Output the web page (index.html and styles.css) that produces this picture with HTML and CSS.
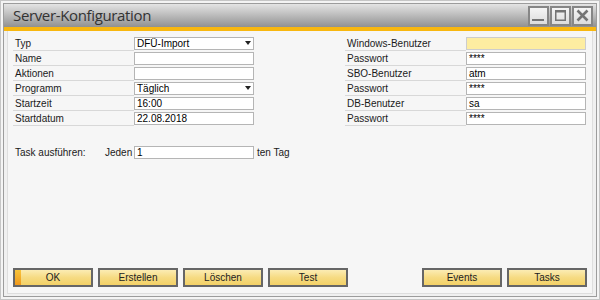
FILE: index.html
```html
<!DOCTYPE html>
<html lang="de">
<head>
    <meta charset="UTF-8">
    <title>Server-Konfiguration</title>
    <link rel="stylesheet" href="styles.css">
</head>
<body>
    <div class="window">
        <div class="titlebar">
            <span class="title">Server-Konfiguration</span>
            <div class="win-buttons">
                <span class="wbtn">
                    <svg width="17" height="16" viewBox="0 0 17 16"><rect x="2" y="11" width="12" height="2" fill="#747474"/></svg>
                </span>
                <span class="wbtn">
                    <svg width="17" height="16" viewBox="0 0 17 16"><rect x="3.75" y="2.75" width="9.5" height="9.5" fill="none" stroke="#747474" stroke-width="1.5"/><rect x="3" y="2" width="11" height="2.5" fill="#747474"/></svg>
                </span>
                <span class="wbtn">
                    <svg width="17" height="16" viewBox="0 0 17 16"><path d="M3.5 2.5 L13.5 12.5 M13.5 2.5 L3.5 12.5" stroke="#747474" stroke-width="2.6"/></svg>
                </span>
            </div>
        </div>
        <div class="accent"></div>

        <div class="panel">
            <div class="form">
                <div class="group">
                    <div class="row"><span class="label">Typ</span><span class="field select">DFÜ-Import</span></div>
                    <div class="row"><span class="label">Name</span><span class="field"></span></div>
                    <div class="row"><span class="label">Aktionen</span><span class="field"></span></div>
                    <div class="row"><span class="label">Programm</span><span class="field select">Täglich</span></div>
                    <div class="row"><span class="label">Startzeit</span><span class="field">16:00</span></div>
                    <div class="row"><span class="label">Startdatum</span><span class="field">22.08.2018</span></div>
                </div>
                <div class="group">
                    <div class="row"><span class="label">Windows-Benutzer</span><span class="field active"></span></div>
                    <div class="row"><span class="label">Passwort</span><span class="field">****</span></div>
                    <div class="row"><span class="label">SBO-Benutzer</span><span class="field">atm</span></div>
                    <div class="row"><span class="label">Passwort</span><span class="field">****</span></div>
                    <div class="row"><span class="label">DB-Benutzer</span><span class="field">sa</span></div>
                    <div class="row"><span class="label">Passwort</span><span class="field">****</span></div>
                </div>
            </div>

            <div class="task">
                <span class="task-label">Task ausführen:</span>
                <span class="task-jeden">Jeden</span>
                <span class="field">1</span>
                <span class="task-unit">ten Tag</span>
            </div>

            <div class="actions">
                <button class="btn primary">OK</button>
                <button class="btn">Erstellen</button>
                <button class="btn">Löschen</button>
                <button class="btn">Test</button>
                <button class="btn push">Events</button>
                <button class="btn">Tasks</button>
            </div>
        </div>
    </div>
</body>
</html>
```

FILE: styles.css
```css
html, body {
    margin: 0;
}
body {
    width: 600px;
    height: 300px;
    box-sizing: border-box;
    border: 1px solid #c6c6c6;
    padding: 2px;
    background: #f4f4f4;
    font-family: "Liberation Sans", Arial, sans-serif;
    font-size: 10px;
    color: #1b1b1b;
}
.window {
    height: 294px;
    box-sizing: border-box;
    border: 1px solid #9c9c9c;
    background: #f0f0f0;
    display: flex;
    flex-direction: column;
}
.titlebar {
    height: 23px;
    display: flex;
    align-items: center;
    padding-left: 9px;
    background: linear-gradient(#e4e4e4, #919191);
}
.title {
    font-family: "Open Sans", "Noto Sans", sans-serif;
    font-size: 15px;
    letter-spacing: -0.35px;
    line-height: 23px;
    color: #333;
}
.win-buttons {
    margin-left: auto;
    align-self: flex-start;
    margin-top: 2px;
    padding-right: 3px;
    display: flex;
    gap: 1px;
}
.wbtn {
    width: 21px;
    height: 20px;
    box-sizing: border-box;
    border: 2px solid #868686;
    background: linear-gradient(#f5f5f5, #dcdcdc);
}
.wbtn svg {
    display: block;
}
.accent {
    height: 4px;
    background: #f8b70f;
}
.panel {
    flex: 1;
    margin: 0 3px 2px 3px;
    border: 1px solid #dedede;
    border-top: none;
    background: #f6f6f6;
    display: flex;
    flex-direction: column;
    padding: 6px 5px 0 5px;
}
.form {
    display: flex;
    gap: 91px;
}
.row {
    display: flex;
    height: 15px;
}
.label {
    width: 121px;
    height: 14px;
    box-sizing: border-box;
    padding-left: 2px;
    line-height: 13px;
    border-bottom: 1px solid #d8d8d8;
}
.field {
    position: relative;
    width: 120px;
    height: 13px;
    box-sizing: border-box;
    border: 1px solid #b5b5b5;
    background: #fff;
    padding: 0 2px;
    line-height: 12px;
    color: #000;
}
.field.active {
    background: #fdeda1;
    border-color: #cdcdcd;
}
.select::after {
    content: "";
    position: absolute;
    right: 2px;
    top: 3px;
    border-left: 3.5px solid transparent;
    border-right: 3.5px solid transparent;
    border-top: 4px solid #222;
}
.task {
    margin-top: 18px;
    display: flex;
    align-items: center;
    height: 14px;
}
.task-label {
    width: 92px;
    padding-left: 2px;
    box-sizing: border-box;
}
.task-jeden {
    width: 29px;
}
.task-unit {
    margin-left: 3px;
}
.actions {
    margin-top: auto;
    padding-bottom: 6px;
    display: flex;
    gap: 5px;
}
.btn {
    width: 80px;
    height: 19px;
    box-sizing: border-box;
    border: 2px solid #666;
    padding: 0;
    margin: 0;
    background: linear-gradient(#fbecb4, #f6db83 50%, #f3d166);
    font-family: "Liberation Sans", Arial, sans-serif;
    font-size: 10px;
    line-height: 15px;
    color: #222;
}
.btn.primary {
    background:
        linear-gradient(#f8c43c, #ef981b) left / 6px 100% no-repeat,
        linear-gradient(#fbecb4, #f6db83 50%, #f3d166);
}
.btn.push {
    margin-left: auto;
}
```
